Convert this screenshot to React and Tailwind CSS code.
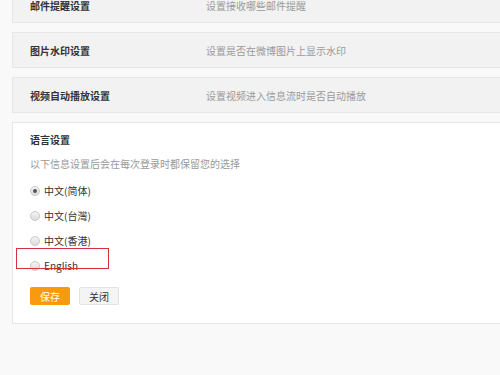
import React from "react";

const font = { fontFamily: '"Noto Sans CJK SC", "Noto Sans", sans-serif' };

function Row({ title, desc }) {
  return (
    <div className="flex h-[36px] w-[500px] items-center border border-r-0 border-[#e6e6e6] bg-[#f2f2f2] text-[10px]">
      <div className="w-[193px] pl-[17px] font-semibold text-[#333]">{title}</div>
      <div className="text-[#9a9a9a]">{desc}</div>
    </div>
  );
}

function Radio({ label, checked, highlight }) {
  return (
    <div className="relative flex h-[25px] items-center">
      {highlight && (
        <div className="pointer-events-none absolute left-[-14px] top-[-5px] h-[21px] w-[93px] border border-[#d2313d]" />
      )}
      <div className="flex items-center gap-[4px]">
        <span className="flex h-[10px] w-[10px] items-center justify-center rounded-full border border-[#c8c8c8] bg-[linear-gradient(#f4f4f4,#dcdcdc)]">
          {checked && <span className="h-[4px] w-[4px] rounded-full bg-[#555]" />}
        </span>
        <span className="text-[10px] text-[#333]">{label}</span>
      </div>
    </div>
  );
}

export default function App() {
  return (
    <div className="h-[375px] w-[500px] overflow-hidden bg-[#f9f9f9] pl-[12px]" style={font}>
      <div className="-mt-[13px] flex flex-col gap-[9px]">
        <Row title="邮件提醒设置" desc="设置接收哪些邮件提醒" />
        <Row title="图片水印设置" desc="设置是否在微博图片上显示水印" />
        <Row title="视频自动播放设置" desc="设置视频进入信息流时是否自动播放" />
        <div className="h-[202px] w-[500px] border border-r-0 border-[#e6e6e6] bg-white pl-[17px] pt-[8px]">
          <div className="text-[10px] font-semibold leading-[18px] text-[#333]">语言设置</div>
          <div className="mt-[6px] text-[10px] leading-[18px] text-[#999]">以下信息设置后会在每次登录时都保留您的选择</div>
          <div className="mt-[5px] flex flex-col">
            <Radio label="中文(简体)" checked />
            <Radio label="中文(台灣)" />
            <Radio label="中文(香港)" />
            <Radio label="English" highlight />
          </div>
          <div className="mt-[9px] flex gap-[9px]">
            <button className="h-[18px] w-[40px] rounded-[2px] bg-[#f99a0e] text-[10px] text-white">保存</button>
            <button className="h-[18px] w-[40px] rounded-[2px] border border-[#e3e3e3] bg-[#f4f4f4] text-[10px] text-[#333]">关闭</button>
          </div>
        </div>
      </div>
    </div>
  );
}
